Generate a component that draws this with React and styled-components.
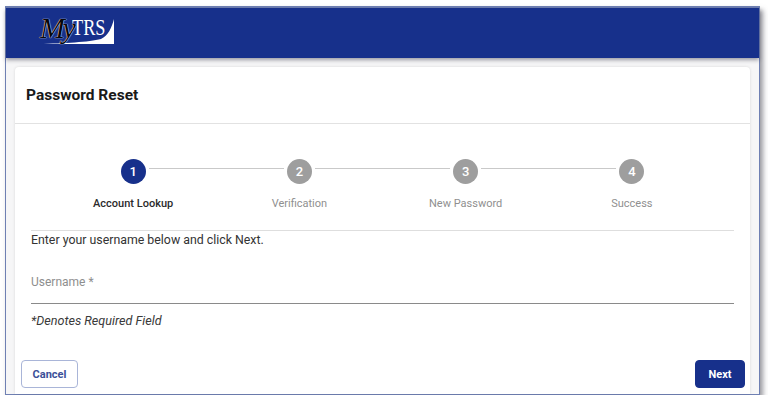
import React from 'react';
import styled, { createGlobalStyle } from 'styled-components';

const GlobalStyle = createGlobalStyle`
  html, body {
    margin: 0;
    padding: 0;
    background: #fff;
    font-family: Roboto, "Liberation Sans", sans-serif;
  }
`;

const Frame = styled.div`
  width: 755px;
  height: 389px;
  margin: 6px 0 0 5px;
  box-sizing: border-box;
  border: 1.5px solid #6f80b3;
  border-top-width: 2px;
  background: #f6f6f7;
  box-shadow: 3px 4px 5px rgba(70, 70, 80, 0.55);
  display: flex;
  flex-direction: column;
`;

const Header = styled.header`
  height: 50px;
  flex-shrink: 0;
  background: #17308b;
  box-shadow: 0 2px 4px rgba(40, 40, 60, 0.45);
  padding-left: 33px;
  display: flex;
  align-items: flex-start;
`;

const Logo = styled.div`
  position: relative;
  width: 78px;
  height: 36px;
  margin-top: 8px;
`;

const LogoSwoosh = styled.svg`
  position: absolute;
  left: 0;
  top: 0;
`;

const LogoMy = styled.span`
  position: absolute;
  left: 1px;
  top: -4px;
  font: italic 400 30px/32px "Liberation Serif", serif;
  letter-spacing: -2.5px;
  color: #08080c;
  text-shadow: 0 0 1px #fff, 0 0 1px #fff;
`;

const LogoTrs = styled.span`
  position: absolute;
  left: 33px;
  top: -1px;
  font: 400 24px/24px "Liberation Serif", serif;
  color: #fff;
  transform: scaleX(0.76);
  transform-origin: left center;
`;

const Card = styled.main`
  flex: 1;
  margin: 9px 9px 0 9px;
  background: #fff;
  border-radius: 4px 4px 0 0;
  box-shadow: 0 0 3px rgba(0, 0, 0, 0.12);
  display: flex;
  flex-direction: column;
  min-height: 0;
`;

const CardTitle = styled.h1`
  margin: 0;
  height: 57px;
  box-sizing: border-box;
  padding: 0 11px;
  display: flex;
  align-items: center;
  border-bottom: 1px solid #e2e2e2;
  font-size: 15.5px;
  font-weight: 700;
  color: #1a1a1a;
`;

const Stepper = styled.ol`
  list-style: none;
  margin: 35px 0 0 35px;
  padding: 0;
  width: 665px;
  display: grid;
  grid-template-columns: repeat(4, 1fr);
`;

const Step = styled.li`
  display: flex;
  flex-direction: column;
  align-items: stretch;
`;

const StepHead = styled.div`
  display: flex;
  align-items: center;
  gap: 3px;
`;

const Connector = styled.span`
  flex: 1;
  height: 1px;
  margin-bottom: 6px;
  background: ${({ $hidden }) => ($hidden ? 'transparent' : '#c9c9c9')};
`;

const StepCircle = styled.span`
  width: 25px;
  height: 25px;
  border-radius: 50%;
  background: ${({ $active }) => ($active ? '#17308b' : '#9e9e9e')};
  color: #fff;
  font-size: 13px;
  font-weight: 500;
  display: flex;
  align-items: center;
  justify-content: center;
`;

const StepLabel = styled.span`
  margin-top: 13px;
  text-align: center;
  font-size: 11px;
  line-height: 13px;
  font-weight: ${({ $active }) => ($active ? 500 : 400)};
  color: ${({ $active }) => ($active ? '#2b2b2b' : '#8f8f8f')};
`;

const FormArea = styled.div`
  margin: 20px 16px 0 16px;
  border-top: 1px solid #dedede;
`;

const Intro = styled.p`
  margin: 0;
  padding-top: 2px;
  font-size: 12.35px;
  line-height: 14px;
  color: #333;
`;

const FieldLabel = styled.label`
  display: block;
  height: 29px;
  box-sizing: border-box;
  margin-top: 28px;
  border-bottom: 1px solid #8a8a8a;
  font-size: 12px;
  line-height: 14px;
  color: #8e8e8e;
`;

const RequiredNote = styled.p`
  margin: 10px 0 0;
  font-size: 12.6px;
  line-height: 14px;
  font-style: italic;
  color: #3a3a3a;
`;

const Actions = styled.div`
  margin-top: auto;
  padding: 0 5px 6px 6px;
  display: flex;
  justify-content: space-between;
`;

const Button = styled.button`
  height: 28px;
  width: ${({ $primary }) => ($primary ? '50px' : '57px')};
  box-sizing: border-box;
  border-radius: 4px;
  border: 1px solid ${({ $primary }) => ($primary ? '#17308b' : '#a9b5d8')};
  background: ${({ $primary }) => ($primary ? '#17308b' : '#fff')};
  color: ${({ $primary }) => ($primary ? '#fff' : '#3c5199')};
  font-family: inherit;
  font-size: 11px;
  font-weight: 700;
  padding: 0;
`;

const steps = ['Account Lookup', 'Verification', 'New Password', 'Success'];

const App = () => (
  <>
    <GlobalStyle />
    <Frame>
      <Header>
        <Logo>
          <LogoSwoosh width="78" height="36" viewBox="0 0 78 36">
            <path
              d="M0 28 C25 27.5 50 26 62 23 C69 20 73 11 75 3 L75 28 Z"
              fill="#fff"
            />
          </LogoSwoosh>
          <LogoTrs>TRS</LogoTrs>
          <LogoMy>My</LogoMy>
        </Logo>
      </Header>
      <Card>
        <CardTitle>Password Reset</CardTitle>
        <Stepper>
          {steps.map((label, index) => (
            <Step key={label}>
              <StepHead>
                <Connector $hidden={index === 0} />
                <StepCircle $active={index === 0}>{index + 1}</StepCircle>
                <Connector $hidden={index === steps.length - 1} />
              </StepHead>
              <StepLabel $active={index === 0}>{label}</StepLabel>
            </Step>
          ))}
        </Stepper>
        <FormArea>
          <Intro>Enter your username below and click Next.</Intro>
          <FieldLabel>Username *</FieldLabel>
          <RequiredNote>*Denotes Required Field</RequiredNote>
        </FormArea>
        <Actions>
          <Button>Cancel</Button>
          <Button $primary>Next</Button>
        </Actions>
      </Card>
    </Frame>
  </>
);

export default App;
